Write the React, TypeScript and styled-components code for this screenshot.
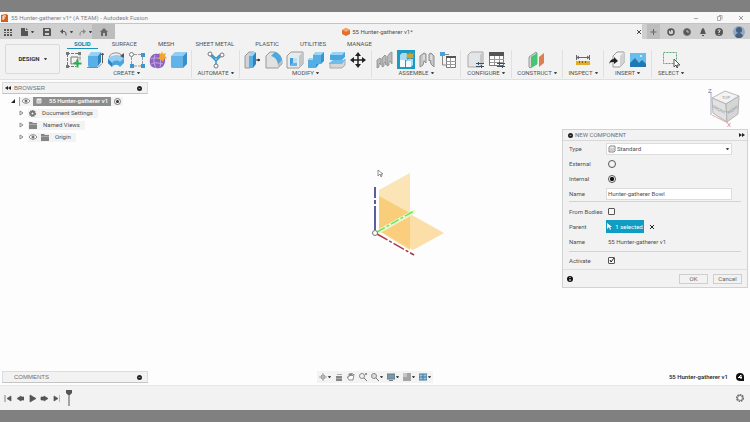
import React from "react";
import styled, { createGlobalStyle, css } from "styled-components";

const GlobalStyle = createGlobalStyle`
  *, *::before, *::after { box-sizing: border-box; }
  body { margin: 0; background: #fff; }
  button, input, select { font: inherit; color: inherit; }
  svg { display: block; flex: none; }
`;

const ink = "#505050";
const chrome = "#f2f2f2";

const Page = styled.div`
  min-height: 100vh;
  display: flex;
  flex-direction: column;
  background: #fff;
  color: ${ink};
  font-family: Roboto, "Liberation Sans", sans-serif;
  font-size: 6px;
  line-height: 8px;
`;

const Band = styled.div`
  flex: none;
  height: 12px;
  background: #808080;
`;

const PlainButton = styled.button`
  display: flex;
  align-items: center;
  justify-content: center;
  border: 0;
  padding: 0;
  background: none;
  cursor: pointer;
`;

/* Window title */
const TitleBar = styled.header`
  display: flex;
  align-items: center;
  gap: 3px;
  height: 11px;
  padding: 0 6px 0 1px;
  background: #f8f8f8;
  color: #808080;
`;
const WindowTitle = styled.h1`
  flex: 1;
  margin: 0;
  font: inherit;
`;
const WindowControls = styled.div`
  display: flex;
  gap: 15px;
`;

/* Tab strip */
const TabStrip = styled.div`
  display: flex;
  height: 16px;
  border-top: 1px solid #c4c4c4;
  background: #cfcfcf;
`;
const QuickAccess = styled.div`
  display: flex;
  align-items: center;
  width: 92px;
  padding-left: 3px;
`;
const QuickButton = styled(PlainButton)<{ $gap?: number }>`
  gap: 3px;
  margin-right: ${(p) => p.$gap ?? 0}px;
`;
const StripTab = styled(PlainButton)<{ $width: number }>`
  width: ${(p) => p.$width}px;
  background: #bdbdbd;
`;
const DocumentTab = styled.div`
  flex: 1;
  display: flex;
  align-items: center;
  justify-content: center;
  background: ${chrome};
`;
const DocumentName = styled.span`
  flex: 1;
  display: flex;
  align-items: center;
  justify-content: center;
  gap: 2px;
  padding-left: 4px;
`;
const StripTools = styled.div`
  display: flex;
  align-items: center;
  gap: 6px;
  padding: 0 4px 0 5px;
`;

/* Ribbon */
const Ribbon = styled.div`
  display: flex;
  height: 41px;
  background: ${chrome};
  border-bottom: 1px solid #e0e0e0;
`;
const WorkspaceButton = styled(PlainButton)`
  flex: none;
  width: 55px;
  height: 30px;
  margin: 5px 2px 0 5px;
  gap: 4px;
  border: 1px solid #dadada;
  border-radius: 2px;
  font-weight: 700;
  color: #333;
`;
const RibbonMain = styled.div`
  flex: 1;
  min-width: 0;
`;
const RibbonTabs = styled.nav`
  display: flex;
  gap: 7px;
  height: 11px;
  padding-left: 5px;
`;
const RibbonTab = styled(PlainButton)<{ $active?: boolean }>`
  height: 10px;
  padding: 0 7px;
  white-space: nowrap;
  border-bottom: 1px solid transparent;
  ${(p) =>
    p.$active &&
    css`
      color: #0a86b0;
      font-weight: 700;
      border-color: #1c93bb;
    `}
`;
const Groups = styled.div`
  display: flex;
  height: 28px;
`;
const Group = styled.section<{ $min: number }>`
  min-width: ${(p) => p.$min}px;
  display: flex;
  flex-direction: column;
  align-items: center;
  padding: 0 3px;
  border-right: 1px solid #e0e0e0;
  &:last-child { border-right: 0; }
`;
const Tools = styled.div`
  display: flex;
  gap: 3px;
  height: 19px;
`;
const ToolButton = styled(PlainButton)<{ $active?: boolean }>`
  width: 18px;
  height: 19px;
  background: ${(p) => (p.$active ? "#1b9bc4" : "none")};
`;
const GroupLabel = styled(PlainButton)`
  gap: 2px;
  height: 8px;
  white-space: nowrap;
`;
const CaretMark = styled.span`
  flex: none;
  border: 1px solid transparent;
  border-top: 2px solid #444;
  border-bottom: 0;
  width: 3px;
`;

/* Canvas */
const Canvas = styled.main`
  position: relative;
  flex: 1;
  display: flex;
  flex-direction: column;
  justify-content: space-between;
  min-height: 300px;
  padding: 2px;
  background: #fdfdfd;
`;
const Viewport = styled.div`
  position: absolute;
  inset: 0;
  display: flex;
  align-items: center;
  justify-content: center;
`;
const PaletteBar = styled.div`
  display: flex;
  align-items: center;
  justify-content: space-between;
  width: 146px;
  height: 12px;
  padding: 0 5px 0 2px;
  background: ${chrome};
  border: 1px solid #dcdcdc;
  border-bottom-color: #c4c4c4;
  color: #707070;
`;
const PaletteTitle = styled.span<{ $indent?: boolean }>`
  display: flex;
  align-items: center;
  gap: 3px;
  padding-left: ${(p) => (p.$indent ? 9 : 0)}px;
  font-family: "Liberation Sans", Arial, sans-serif;
`;
const BrowserPanel = styled.aside`
  position: relative;
  width: 146px;
`;
const Tree = styled.ul`
  list-style: none;
  margin: 1px 0 0;
  padding: 0;
`;
const TreeRow = styled.li<{ $depth: number }>`
  display: flex;
  align-items: center;
  gap: 4px;
  height: 12px;
  padding-left: ${(p) => (p.$depth ? 17 : 8)}px;
`;
const TreeItem = styled.span<{ $root?: boolean }>`
  display: flex;
  align-items: center;
  gap: 4px;
  height: 9px;
  padding: 0 5px 0 1px;
  background: #f3f3f3;
  ${(p) =>
    p.$root &&
    css`
      padding: 0 2px;
      gap: 3px;
      border-left: 1px solid #e98b95;
    `}
`;
const TreeLabel = styled.span`
  padding-left: 2px;
`;
const SelectedNode = styled.span`
  display: flex;
  align-items: center;
  gap: 6px;
  height: 9px;
  padding: 0 3px 0 2px;
  background: #8d8d8d;
  color: #fff;
  font-weight: 500;
`;
const CanvasFooter = styled.div`
  position: relative;
  display: grid;
  grid-template-columns: 1fr auto 1fr;
  align-items: center;
`;
const NavBar = styled.div`
  display: flex;
  align-items: center;
  gap: 4px;
  height: 12px;
  padding: 0 2px;
  background: #f3f3f3;
`;
const NavButton = styled(PlainButton)`
  gap: 1px;
`;
const DocumentBadge = styled.div`
  display: flex;
  align-items: center;
  justify-content: flex-end;
  gap: 8px;
  padding-right: 4px;
  color: #222;
  font-weight: 500;
`;
const CubeHolder = styled.div`
  position: absolute;
  top: 6px;
  right: 8px;
`;

/* Dialog */
const Dialog = styled.form`
  position: absolute;
  top: 49px;
  right: 2px;
  width: 186px;
  background: ${chrome};
  border: 1px solid #d2d2d2;
`;
const DialogHeader = styled.div`
  display: flex;
  align-items: center;
  gap: 2px;
  height: 11px;
  padding: 0 2px 0 5px;
  border-bottom: 1px solid #d8d8d8;
  color: #707070;
`;
const DialogTitle = styled.h2`
  flex: 1;
  margin: 0;
  font: inherit;
`;
const Fields = styled.div<{ $pad?: number; $last?: boolean }>`
  margin: 0 6px;
  padding: ${(p) => p.$pad ?? 0}px 0;
  border-bottom: ${(p) => (p.$last ? "0" : "1px solid #d2d2d2")};
`;
const Field = styled.div`
  display: grid;
  grid-template-columns: 37px 1fr;
  align-items: center;
  height: 15px;
`;
const Value = styled.div`
  display: flex;
  align-items: center;
  gap: 5px;
`;
const ParentName = styled.output`
  padding-left: 2px;
`;
const box = css`
  height: 12px;
  width: 126px;
  border: 1px solid #dcdcdc;
  border-radius: 0;
  background: #fff;
  outline: 0;
`;
const SelectBox = styled.div`
  ${box}
  display: flex;
  align-items: center;
  gap: 1px;
  padding: 0 2px 0 1px;
`;
const TypeSelect = styled.select`
  flex: 1;
  appearance: none;
  border: 0;
  padding: 0;
  background: none;
  outline: 0;
`;
const TextInput = styled.input`
  ${box}
  padding: 0 1px;
`;
const Radio = styled.input`
  appearance: none;
  width: 8px;
  height: 8px;
  margin: 0 0 0 2px;
  border: 1px solid #555;
  border-radius: 50%;
  background: #f5f5f5;
  &:checked { background: radial-gradient(circle, #111 40%, #f5f5f5 60%); }
`;
const Check = styled.span`
  display: grid;
  justify-content: start;
  margin-left: 2px;
  > * { grid-area: 1 / 1; }
  svg { pointer-events: none; visibility: hidden; }
  input:checked + svg { visibility: visible; }
`;
const CheckInput = styled.input`
  appearance: none;
  width: 7px;
  height: 7px;
  margin: 0;
  border: 1px solid #555;
  border-radius: 1px;
  background: #f8f8f8;
`;
const SelectionButton = styled(PlainButton)`
  gap: 3px;
  width: 38px;
  height: 13px;
  background: #119cc4;
  color: #fff;
`;
const DialogFooter = styled.div`
  display: flex;
  align-items: center;
  gap: 5px;
  height: 18px;
  padding: 0 5px 0 4px;
  border-top: 1px solid #dedede;
`;
const Spacer = styled.span`
  flex: 1;
`;
const ActionButton = styled(PlainButton)`
  width: 29px;
  height: 10px;
  border: 1px solid #cfcfcf;
  color: #666;
`;

/* Timeline */
const Timeline = styled.footer`
  display: flex;
  align-items: center;
  gap: 4px;
  height: 25px;
  padding: 0 6px 0 4px;
  background: ${chrome};
  border-top: 1px solid #e6e6e6;
`;

type IconProps = { w?: number; h?: number; box?: string; children: React.ReactNode };
const Icon = ({ w = 18, h = 18, box: viewBox, children }: IconProps) => (
  <svg width={w} height={h} viewBox={viewBox ?? `0 0 ${w} ${h}`} fill="none" aria-hidden="true">
    {children}
  </svg>
);

const Caret = () => <CaretMark />;

/* Ribbon drawings */
const BlueBox = () => (
  <Icon>
    <path d="M1 5l4-4h12l-4 4z" fill="#91cdf2" />
    <path d="M1 5h12v12H2l-1-1z" fill="#62b4e8" />
    <path d="M13 5l4-4v12l-4 4z" fill="#3a8fc6" />
  </Icon>
);
const SketchIcon = () => (
  <Icon>
    <path d="M2.500 3v12.500H11M2 2.500h13V10" stroke="#777" strokeDasharray="3 1" />
    <path d="M1 1h3v3H1zM13 1h3v3h-3zM1 14h3v3H1z" fill="#777" />
    <path d="M6 6h7c0 4-3 7-7 7z" stroke="#777" />
    <path d="M12.500 8.500v8M8.500 12.500h8" stroke="#25ac4d" strokeWidth="2" />
  </Icon>
);
const ExtrudeIcon = () => (
  <Icon>
    <path d="M1 16.500h11l4-4" stroke="#888" />
    <path d="M2 5l3-4h10l-3 4z" fill="#96d0f3" />
    <path d="M2 5h10v10l-1 1H3l-1-1z" fill="#58b0e6" />
    <path d="M12 5l3-4v10l-3 4z" fill="#2d83bd" />
    <path d="M16.500 12V2M15 4l1.500-2L18 4" stroke="#555" />
  </Icon>
);
const RevolveIcon = () => (
  <Icon>
    <path d="M2 6c2-5 11-6 14 0" stroke="#888" />
    <path d="M1 8c2-4 13-5 16-1v5l-4 4c-2-3-6-3-8 0l-4-4z" fill="#4ba5dd" />
    <path d="M1 8c2-4 13-5 16-1l-4 4c-2-2-6-2-8 1z" fill="#93cdf1" />
    <path d="M1 8l4 4v4l-4-4z" fill="#2e86c0" />
    <path d="M13 5l4 2V2z" fill="#555" />
  </Icon>
);
const RigIcon = () => (
  <Icon>
    <path d="M6 3.500h8M3.500 6v7M6 15h7M14.500 6v7" stroke="#999" strokeDasharray="3 1" />
    <circle cx="3.500" cy="3.500" r="2" fill="#fff" stroke="#777" />
    <path d="M13 2h4v4h-4zM2 13h4v4H2zM13 13h4v4h-4z" fill="#3d96cf" />
  </Icon>
);
const FormIcon = () => (
  <Icon>
    <path d="M1 8c1-4 4-6 8-5 5-1 8 3 7 8-1 5-4 7-9 6-5 0-7-4-6-9z" fill="#8b62be" />
    <path d="M2 8c4-2 7-1 13 1M6 4c-2 5-1 9 1 13M11 4c1 4 1 8 0 12M2 13c4-2 8-1 12 0" stroke="#c6a9e8" />
    <path d="M13 0l1 3 3-1-1 3 2 2-3 1-1 3-2-3-3 0 2-3-1-3 2 1z" fill="#f0a52d" />
  </Icon>
);
const AutomateIcon = () => (
  <Icon>
    <path d="M3 4l6 6 6-6M9 10v5M4 4c3 0 3 3 5 3s2-3 5-3" stroke="#3294c7" strokeWidth="1.500" />
    <circle cx="3" cy="3" r="2" fill="#fff" stroke="#777" />
    <circle cx="15" cy="4" r="2" fill="#fff" stroke="#777" />
    <circle cx="9" cy="15" r="2" fill="#fff" stroke="#777" />
  </Icon>
);
const PressPullIcon = () => (
  <Icon>
    <path d="M1 5l4-4h5v12l-4 4H1z" fill="#cfd2d4" stroke="#999" />
    <path d="M5 5h4v12H5z" fill="#58b0e6" />
    <path d="M5 5l3-4h4L9 5z" fill="#9bd2f3" />
    <path d="M9 5l3-4v12l-3 4z" fill="#2d83bd" />
    <path d="M12 9h3M14 8l2 1-2 1z" fill="#333" stroke="#333" />
  </Icon>
);
const FilletIcon = () => (
  <Icon>
    <path d="M1 5l4-4h4c5 1 8 5 8 10v2l-4 4H1z" fill="#dfe1e2" stroke="#999" />
    <path d="M6 5l4-4c4 1 7 5 7 10l-4 4c0-6-3-9-7-10z" fill="#4da8df" />
    <path d="M13 13l4-4v4l-4 4z" fill="#bcbec0" />
  </Icon>
);
const ShellIcon = () => (
  <Icon>
    <path d="M1 5l4-4h12v12l-4 4H1z" fill="#e8e9ea" stroke="#999" />
    <path d="M13 5l4-4v12l-4 4z" fill="#c3c5c7" />
    <path d="M4 7h7v8H4z" fill="#b9e0f6" />
    <path d="M4 7h3v5l-3 3z" fill="#3e9dd6" />
    <path d="M4 15l3-3h4v3z" fill="#62b4e8" />
  </Icon>
);
const CombineIcon = () => (
  <Icon>
    <path d="M6 4l3-3h8v9l-3 3h-2l-3 4H1V9l2-2h3z" fill="#3595d0" />
    <path d="M6 4l3-3h8l-3 3zM1 9l2-2h3v2z" fill="#9ed4f4" />
    <path d="M6 4h8v9H9v4H1V9h5z" fill="#55afe5" />
  </Icon>
);
const SplitIcon = () => (
  <Icon>
    <path d="M2 4l3-3h12v5l-3 3H2z" fill="#4ba7df" />
    <path d="M2 4l3-3h12l-3 3z" fill="#9cd3f4" />
    <path d="M2 12h12l3-4v6l-3 3H2z" fill="#d4d6d8" stroke="#aaa" />
    <path d="M1 12l4-3h12l-3 4H1z" fill="#6fbdeb" />
  </Icon>
);
const MoveIcon = () => (
  <Icon>
    <path d="M9 3v12M3 9h12" stroke="#222" strokeWidth="1.500" />
    <path d="M9 1l3 4H6zM9 17l-3-4h6zM1 9l4-3v6zM17 9l-4 3V6z" fill="#222" />
  </Icon>
);
const JointIcon = () => (
  <Icon>
    <path d="M1 9l3-2 1 1v6l-1-2-1 1v3l-2 1zM6 7l3-3 1 1v9l-1-3-1 1v3l-2 1zM11 6l3-4 2-1v12l-2-3-1 1v3l-2 1z" fill="#b9bbbd" stroke="#8a8a8a" strokeWidth=".8" />
  </Icon>
);
const NewComponentIcon = () => (
  <Icon>
    <path d="M3 4l2-2h5v7H3z" fill="#a9dcf2" />
    <path d="M3 9h5v7H3z" fill="#f3fafd" />
    <path d="M9 10l2-2h5v6l-2 2H9z" fill="#a9dcf2" />
    <path d="M9 10h5v6H9z" fill="#f4fbfe" />
    <path d="M13 1l1 2 3-1-1 3 1 2-3 0-1 2-1-2-3 0 1-2-1-3 3 1z" fill="#c9a439" />
  </Icon>
);
const AsBuiltIcon = () => (
  <Icon>
    <path d="M2 5l4-3 2 1v9l-2-2-1 4-3 2zM11 3l2-1 3 3v11l-3-3-1-4-1 1z" fill="#c6c8ca" stroke="#8e8e8e" />
    <path d="M6 4v5M13 4v5" stroke="#eee" />
  </Icon>
);
const TableIcon = () => (
  <Icon>
    <path d="M1 1h5v4H1z" fill="#4aa3d8" />
    <path d="M3.500 5v9H8M6 3.500h4" stroke="#888" />
    <path d="M7.500 5.500h9v11h-9z" fill="#fff" stroke="#777" />
    <path d="M7 5h10v2H7z" fill="#555" />
    <path d="M7 10.500h10M7 13.500h10M11.500 7v10" stroke="#999" />
  </Icon>
);
const Sliders = () => (
  <path d="M9 12.500h8M9 15.500h8M11.500 11v3M14.500 14v3" stroke="#3c5260" />
);
const ConfigureIcon = () => (
  <Icon>
    <path d="M1 4l3-3h12v11l-3 4H1z" fill="#e4e5e6" stroke="#aaa" />
    <path d="M13 4l3-3v11l-3 4z" fill="#c4c6c8" />
    <Sliders />
  </Icon>
);
const ConfigTableIcon = () => (
  <Icon>
    <path d="M1.500 1.500h14v13h-14z" fill="#fff" stroke="#777" />
    <path d="M1 1h15v4H1z" fill="#555" />
    <path d="M2 8.500h14M2 11.500h14M6.500 5v9M11.500 5v9" stroke="#999" />
    <Sliders />
  </Icon>
);
const ConstructIcon = () => (
  <Icon>
    <path d="M1 6l7-5 1 1v11l-7 4-1-1z" fill="#d5d8d6" stroke="#999" />
    <path d="M3 6l6-4v11l-6 4z" fill="#45c673" />
    <path d="M11 6l5-4v10l-5 4z" fill="#dc8052" />
  </Icon>
);
const InspectIcon = () => (
  <Icon>
    <path d="M2.500 4v5M15.500 4v5M3 6.500h12M5 5L3 6.500 5 8M13 5l2 1.500L13 8" stroke="#666" />
    <path d="M2 10h14v4H2z" fill="#dfac2d" />
    <path d="M5.500 10v2M8.500 10v2M11.500 10v2" stroke="#85651b" />
  </Icon>
);
const InsertIcon = () => (
  <Icon>
    <path d="M5 5l4-4h7v11l-4 4H5z" fill="#f4f4f4" stroke="#999" />
    <path d="M12 5v11l4-4V1z" fill="#cfd1d3" />
    <path d="M1 13c1-4 3-5 5-5V6l4 4-4 3v-2c-2 0-4 0-5 2z" fill="#222" />
  </Icon>
);
const PictureIcon = () => (
  <Icon>
    <path d="M1 2h16v14H1z" fill="#67bdeb" />
    <path d="M1 12l5-5 4 5 3-3 4 4v3H1z" fill="#2278b2" />
    <circle cx="12" cy="5" r="1" fill="#e9f7ff" />
  </Icon>
);
const SelectIcon = () => (
  <Icon>
    <path d="M1.500 1.500h13v11h-13z" stroke="#52a876" strokeDasharray="2 1" />
    <path d="M12 8v8l2-2 1 3 1-1-1-2h3z" fill="#fff" stroke="#555" />
  </Icon>
);

const GearIcon = ({ size = 8, light = false }: { size?: number; light?: boolean }) => (
  <Icon w={size} h={size} box="0 0 10 10">
    <circle cx="5" cy="5" r="4" stroke="#666" strokeWidth="2" strokeDasharray="2 1" />
    <circle cx="5" cy="5" r={light ? 3 : 2.5} stroke="#666" strokeWidth={light ? 1 : 2} fill="#fff" />
  </Icon>
);
const DotIcon = () => (
  <Icon w={5} h={5} box="0 0 6 6">
    <circle cx="3" cy="3" r="3" fill="#222" />
    <path d="M2 3h2" stroke="#aaa" />
  </Icon>
);
const RewindIcon = ({ flip = false }: { flip?: boolean }) => (
  <Icon w={6} h={6}>
    <path d={flip ? "M0 1l3 2-3 2zM3 1l3 2-3 2z" : "M6 1L3 3l3 2zM3 1L0 3l3 2z"} fill="#222" />
  </Icon>
);
const EyeIcon = () => (
  <Icon w={8} h={6}>
    <path d="M0 3c2-3 6-3 8 0-2 3-6 3-8 0z" fill="#fff" stroke="#888" />
    <circle cx="4" cy="3" r="1.500" fill="#777" />
  </Icon>
);
const FolderIcon = () => (
  <Icon w={8} h={7}>
    <path d="M0 0h3l1 1h4v6H0z" fill="#858585" />
    <path d="M0 2.500h8" stroke="#aaa" />
  </Icon>
);
const TwistyIcon = ({ open = false }: { open?: boolean }) => (
  <Icon w={5} h={6}>
    {open ? <path d="M5 1v4H1z" fill="#222" /> : <path d="M1 1l3 2-3 2z" stroke="#888" fill="#fff" />}
  </Icon>
);
const BodyIcon = () => (
  <Icon w={8} h={8}>
    <path d="M1 2l1-1h5v5L6 7H1z" fill="#eee" stroke="#888" />
    <path d="M2 3h4v3H2z" fill="#cfcfcf" />
  </Icon>
);
const CrossIcon = ({ size = 6, color = "#444" }: { size?: number; color?: string }) => (
  <Icon w={size} h={size} box="0 0 6 6">
    <path d="M1 1l4 4M5 1L1 5" stroke={color} />
  </Icon>
);

const OriginDrawing = () => (
  <svg width="160" height="140" viewBox="-80 -70 160 140" aria-label="Origin planes and axes">
    <path d="M4-43L35-60v41L4-3z" fill="#f9cf7c" fillOpacity=".55" />
    <path d="M4-37l31 17v37L4-2z" fill="#f8bb4b" fillOpacity=".55" />
    <path d="M6-1l29-18L69 0 38 17z" fill="#f9c462" fillOpacity=".55" />
    <path d="M3-1l37-21" stroke="#eef7d4" strokeWidth="4" />
    <path d="M2-1l37-21" stroke="#6be85a" strokeWidth="1.500" strokeDasharray="9 2 3 2" />
    <path d="M0-3v-43" stroke="#5c5e9a" strokeWidth="2" strokeDasharray="24 2 4 2" />
    <path d="M2 1l37 21" stroke="#a83a4b" strokeWidth="1.500" strokeDasharray="12 2 3 2" />
    <circle cx="0" cy="0" r="2.500" fill="#fff" stroke="#777" />
    <path d="M3-63v6l2-2 1 3 1-1-1-2h2z" fill="#fff" stroke="#777" strokeWidth=".8" />
  </svg>
);

const CubeLabel = styled.text`
  font: 400 4px "Liberation Sans", sans-serif;
  fill: #888;
  text-anchor: middle;
`;
const AxisLabel = styled.text<{ $color: string }>`
  font: 400 6px "Liberation Sans", sans-serif;
  fill: ${(p) => p.$color};
`;
const ViewCube = () => (
  <svg width="35" height="42" viewBox="0 0 35 42" aria-label="View cube">
    <path d="M4 6v23" stroke="#a5a8d0" />
    <path d="M5 29l16 8" stroke="#e9aaaa" />
    <path d="M5 12l13-7 14 5-13 8z" fill="#f3f3f3" stroke="#bbb" />
    <path d="M5 12l14 6 1 18-14-9z" fill="#e2e2e2" stroke="#b4b4b4" />
    <path d="M19 18l13-8-1 18-11 8z" fill="#d6d6d6" stroke="#b4b4b4" />
    <CubeLabel x="19" y="13">TOP</CubeLabel>
    <CubeLabel transform="rotate(27 12 24)" x="12" y="25">FRONT</CubeLabel>
    <CubeLabel transform="rotate(-33 26 24)" x="26" y="25">RIGHT</CubeLabel>
    <AxisLabel $color="#7478a8" x="1" y="7">Z</AxisLabel>
    <AxisLabel $color="#e26c6c" x="20" y="41">X</AxisLabel>
  </svg>
);

type GroupDef = { name: string; min: number; tools: [string, React.FC, boolean?][] };
const groups: GroupDef[] = [
  { name: "CREATE", min: 130, tools: [["Create sketch", SketchIcon], ["Extrude", ExtrudeIcon], ["Revolve", RevolveIcon], ["Rig", RigIcon], ["Create form", FormIcon], ["Box", BlueBox]] },
  { name: "AUTOMATE", min: 48, tools: [["Automate", AutomateIcon]] },
  { name: "MODIFY", min: 132, tools: [["Press pull", PressPullIcon], ["Fillet", FilletIcon], ["Shell", ShellIcon], ["Combine", CombineIcon], ["Split body", SplitIcon], ["Move", MoveIcon]] },
  { name: "ASSEMBLE", min: 89, tools: [["Joint", JointIcon], ["New component", NewComponentIcon, true], ["As-built joint", AsBuiltIcon], ["Parts table", TableIcon]] },
  { name: "CONFIGURE", min: 51, tools: [["Configure", ConfigureIcon], ["Configuration table", ConfigTableIcon]] },
  { name: "CONSTRUCT", min: 51, tools: [["Offset plane", ConstructIcon]] },
  { name: "INSPECT", min: 41, tools: [["Measure", InspectIcon]] },
  { name: "INSERT", min: 48, tools: [["Insert derive", InsertIcon], ["Insert image", PictureIcon]] },
  { name: "SELECT", min: 38, tools: [["Select", SelectIcon]] },
];
const ribbonTabs = ["SOLID", "SURFACE", "MESH", "SHEET METAL", "PLASTIC", "UTILITIES", "MANAGE"];

const playback: [string, string][] = [
  ["Go to start", "M1 1v7M7 2v5L3 4.500z"],
  ["Step back", "M1 4.500L5 2v1h3v3H5v1z"],
  ["Play", "M2 1l6 3.500L2 8z"],
  ["Step forward", "M8 4.500L4 2v1H1v3h3v1z"],
  ["Go to end", "M8 1v7M2 2v5l4-2.500z"],
];

const navTools: [string, boolean, React.ReactNode][] = [
  ["Orbit", true, <><circle cx="4" cy="4" r="2" stroke="#888" /><path d="M4 0v8M0 4h8" stroke="#aaa" /></>],
  ["Look at", false, <><path d="M1 3h6v5H1z" fill="#888" /><path d="M2 1.500h5M1 5.500h6" stroke="#aaa" /></>],
  ["Pan", false, <path d="M2 7L0 4l2 0V1l1 2 0-3 1 3 1-3 0 3 2-2-1 6z" stroke="#777" fill="#fff" strokeWidth=".8" />],
  ["Zoom", false, <><circle cx="3" cy="3" r="2.500" stroke="#888" /><path d="M5 5l3 3M6 1h2M7 0v2" stroke="#777" /></>],
  ["Fit", true, <><circle cx="3" cy="3" r="2.500" stroke="#888" fill="#ddd" /><path d="M5 5l3 3" stroke="#777" /></>],
  ["Display", true, <><path d="M0 1h8v5H0z" fill="#6f9cba" stroke="#777" /><path d="M2 7.500h4" stroke="#777" /></>],
  ["Grid", true, <><path d="M0 0h8v8H0z" fill="#a4a4a4" /><path d="M0 0h4v4H0z" fill="#c6c6c6" /></>],
  ["Viewports", true, <><path d="M0 1h8v6H0z" fill="#9bc4dd" stroke="#47799b" /><path d="M4 1v6M0 4h8" stroke="#47799b" /></>],
];

export default function App() {
  return (
    <Page>
      <GlobalStyle />
      <Band />
      <TitleBar>
        <Icon w={7} h={8}>
          <path d="M0 1l5-1 2 1v7H0z" fill="#d75f1c" />
          <path d="M2 6V2h3M2 4h2" stroke="#fff" />
        </Icon>
        <WindowTitle>55 Hunter-gatherer v1* (A TEAM) - Autodesk Fusion</WindowTitle>
        <WindowControls>
          <PlainButton type="button" aria-label="Minimize"><Icon w={8} h={6}><path d="M2 3.500h4" stroke="#aaa" /></Icon></PlainButton>
          <PlainButton type="button" aria-label="Restore"><Icon w={8} h={6}><path d="M2.500 1.500h3v4h-3zM4 .5h3v4" stroke="#aaa" /></Icon></PlainButton>
          <PlainButton type="button" aria-label="Close window"><CrossIcon color="#999" /></PlainButton>
        </WindowControls>
      </TitleBar>

      <TabStrip>
        <QuickAccess>
          <QuickButton type="button" aria-label="Data panel" $gap={9}>
            <Icon w={9} h={8}><path d="M1 1h2v2H1zM4 1h2v2H4zM7 1h2v2H7zM1 4h2v1H1zM4 4h2v1H4zM7 4h2v1H7zM1 6h2v2H1zM4 6h2v2H4zM7 6h2v2H7z" fill="#555" /></Icon>
          </QuickButton>
          <QuickButton type="button" aria-label="File" $gap={9}>
            <Icon w={7} h={8}><path d="M0 0h4v3h3v5H0z" fill="#555" /><path d="M5 0l2 2H5z" fill="#555" /></Icon><Caret />
          </QuickButton>
          <QuickButton type="button" aria-label="Save" $gap={9}>
            <Icon w={8} h={8}><path d="M0 0h7l1 1v7H0z" fill="#555" /><path d="M2 1h4v2H2zM2 5h4v2H2z" fill="#cfcfcf" /></Icon>
          </QuickButton>
          <QuickButton type="button" aria-label="Undo" $gap={6}>
            <Icon w={7} h={8}><path d="M2 3.500h2c2 0 2 2 2 4" stroke="#555" /><path d="M0 3.500L3 1v5z" fill="#555" /></Icon><Caret />
          </QuickButton>
          <QuickButton type="button" aria-label="Redo">
            <Icon w={7} h={8}><path d="M5 3.500H3c-2 0-2 2-2 4" stroke="#888" /><path d="M7 3.500L4 1v5z" fill="#888" /></Icon><Caret />
          </QuickButton>
        </QuickAccess>
        <StripTab type="button" aria-label="Home" $width={23}>
          <Icon w={8} h={8}><path d="M4 0l4 4H7v4H5V5H3v3H1V4H0z" fill="#666" /></Icon>
        </StripTab>
        <DocumentTab>
          <DocumentName>
            <Icon w={8} h={8}>
              <path d="M0 2l4-2 4 2v4L4 8 0 6z" fill="#e2702a" />
              <path d="M0 2l4-2 4 2-4 2z" fill="#f5a468" />
            </Icon>
            55 Hunter-gatherer v1*
          </DocumentName>
          <PlainButton type="button" aria-label="Close tab"><CrossIcon /></PlainButton>
        </DocumentTab>
        <StripTools>
          <StripTab type="button" aria-label="New tab" $width={13}>
            <Icon w={13} h={15}><path d="M6.500 5v6M3.500 8h6" stroke="#666" /></Icon>
          </StripTab>
          <PlainButton type="button" aria-label="Extensions"><Icon w={10} h={8}><circle cx="5" cy="4" r="3" stroke="#555" strokeWidth="1.500" /><path d="M2 1h3v3z" fill="#555" /></Icon></PlainButton>
          <PlainButton type="button" aria-label="Job status"><Icon w={10} h={8}><circle cx="5" cy="4" r="3.500" fill="#555" stroke="#777" /><path d="M5 2v2h2" stroke="#ccc" /></Icon></PlainButton>
          <PlainButton type="button" aria-label="Notifications"><Icon w={10} h={8}><path d="M2 6c1-1 1-5 3-6 2 1 2 5 3 6zM4 7h2v1H4z" fill="#555" /></Icon></PlainButton>
          <PlainButton type="button" aria-label="Help"><Icon w={10} h={8}><circle cx="5" cy="4" r="4" fill="#555" /><path d="M4 3c0-2 3-1 2 0L5 4v1M5 6v1" stroke="#eee" /></Icon></PlainButton>
          <PlainButton type="button" aria-label="Account">
            <Icon w={16} h={12}><circle cx="9" cy="6" r="6" fill="#93a9c4" /><circle cx="9" cy="4" r="3" fill="#466080" /><path d="M5 10c1-4 7-4 8 0-2 3-6 3-8 0z" fill="#466080" /></Icon>
          </PlainButton>
        </StripTools>
      </TabStrip>

      <Ribbon>
        <WorkspaceButton type="button">DESIGN <Caret /></WorkspaceButton>
        <RibbonMain>
          <RibbonTabs>
            {ribbonTabs.map((t, i) => <RibbonTab type="button" key={t} $active={i === 0}>{t}</RibbonTab>)}
          </RibbonTabs>
          <Groups>
            {groups.map((g) => (
              <Group key={g.name} $min={g.min}>
                <Tools>
                  {g.tools.map(([name, Drawing, active]) => (
                    <ToolButton type="button" key={name} aria-label={name} $active={active}><Drawing /></ToolButton>
                  ))}
                </Tools>
                <GroupLabel type="button">{g.name} <Caret /></GroupLabel>
              </Group>
            ))}
          </Groups>
        </RibbonMain>
      </Ribbon>

      <Canvas>
        <Viewport><OriginDrawing /></Viewport>
        <BrowserPanel>
          <PaletteBar>
            <PaletteTitle><RewindIcon />BROWSER</PaletteTitle>
            <DotIcon />
          </PaletteBar>
          <Tree>
            <TreeRow $depth={0}>
              <TwistyIcon open />
              <TreeItem $root>
                <EyeIcon />
                <SelectedNode><BodyIcon />55 Hunter-gatherer v1</SelectedNode>
                <Icon w={7} h={7}><circle cx="3.500" cy="3.500" r="3" stroke="#777" /><circle cx="3.500" cy="3.500" r="1.500" fill="#333" /></Icon>
              </TreeItem>
            </TreeRow>
            <TreeRow $depth={1}><TwistyIcon /><TreeItem><GearIcon size={7} /><TreeLabel>Document Settings</TreeLabel></TreeItem></TreeRow>
            <TreeRow $depth={1}><TwistyIcon /><TreeItem><FolderIcon /><TreeLabel>Named Views</TreeLabel></TreeItem></TreeRow>
            <TreeRow $depth={1}><TwistyIcon /><TreeItem><EyeIcon /><FolderIcon /><TreeLabel>Origin</TreeLabel></TreeItem></TreeRow>
          </Tree>
        </BrowserPanel>

        <CubeHolder><ViewCube /></CubeHolder>

        <Dialog onSubmit={(e) => e.preventDefault()}>
          <DialogHeader>
            <DotIcon />
            <DialogTitle>NEW COMPONENT</DialogTitle>
            <RewindIcon flip />
          </DialogHeader>
          <Fields>
            <Field>
              <label htmlFor="type">Type</label>
              <SelectBox>
                <BodyIcon />
                <TypeSelect id="type" defaultValue="Standard"><option>Standard</option></TypeSelect>
                <Caret />
              </SelectBox>
            </Field>
            <Field><label htmlFor="external">External</label><Radio id="external" type="radio" name="location" /></Field>
            <Field><label htmlFor="internal">Internal</label><Radio id="internal" type="radio" name="location" defaultChecked /></Field>
            <Field><label htmlFor="name">Name</label><TextInput id="name" defaultValue="Hunter-gatherer Bowl" autoFocus /></Field>
          </Fields>
          <Fields $pad={2}>
            <Field><label htmlFor="bodies">From Bodies</label><Check><CheckInput id="bodies" type="checkbox" /><Icon w={7} h={7}><path d="M2 3l1 2 3-4" stroke="#222" /></Icon></Check></Field>
            <Field>
              <label htmlFor="parent">Parent</label>
              <Value>
                <SelectionButton type="button" id="parent">
                  <Icon w={5} h={7}><path d="M0 0v6l2-2 1 3 1-1-1-2h2z" fill="#fff" /></Icon>1 selected
                </SelectionButton>
                <PlainButton type="button" aria-label="Clear selection"><CrossIcon color="#222" /></PlainButton>
              </Value>
            </Field>
            <Field><label htmlFor="parent-name">Name</label><ParentName id="parent-name">55 Hunter-gatherer v1</ParentName></Field>
          </Fields>
          <Fields $pad={1} $last>
            <Field>
              <label htmlFor="activate">Activate</label>
              <Check>
                <CheckInput id="activate" type="checkbox" defaultChecked />
                <Icon w={7} h={7}><path d="M2 3l1 2 3-4" stroke="#222" /></Icon>
              </Check>
            </Field>
          </Fields>
          <DialogFooter>
            <Icon w={6} h={6}><circle cx="3" cy="3" r="3" fill="#111" /><path d="M3 1v1M3 3v2" stroke="#fff" /></Icon>
            <Spacer />
            <ActionButton type="submit">OK</ActionButton>
            <ActionButton type="button">Cancel</ActionButton>
          </DialogFooter>
        </Dialog>

        <CanvasFooter>
          <PaletteBar><PaletteTitle $indent>COMMENTS</PaletteTitle><DotIcon /></PaletteBar>
          <NavBar>
            {navTools.map(([name, menu, art]) => (
              <NavButton type="button" key={name} aria-label={name}><Icon w={8} h={8}>{art}</Icon>{menu && <Caret />}</NavButton>
            ))}
          </NavBar>
          <DocumentBadge>
            55 Hunter-gatherer v1
            <Icon w={8} h={8}><path d="M4 0a4 4 0 014 4v4H4a4 4 0 010-8z" fill="#111" /><path d="M2 5l3-3v4M3 4.500h3" stroke="#fff" /></Icon>
          </DocumentBadge>
        </CanvasFooter>
      </Canvas>

      <Timeline>
        {playback.map(([name, d]) => (
          <PlainButton type="button" key={name} aria-label={name}><Icon w={8} h={9}><path d={d} fill="#555" stroke="#555" strokeWidth=".7" /></Icon></PlainButton>
        ))}
        <Icon w={8} h={16}><path d="M2 0h6v3L6 5H4L2 3z" fill="#555" /><path d="M5 4v12" stroke="#555" /></Icon>
        <Spacer />
        <PlainButton type="button" aria-label="Timeline settings"><GearIcon light /></PlainButton>
      </Timeline>
      <Band />
    </Page>
  );
}
